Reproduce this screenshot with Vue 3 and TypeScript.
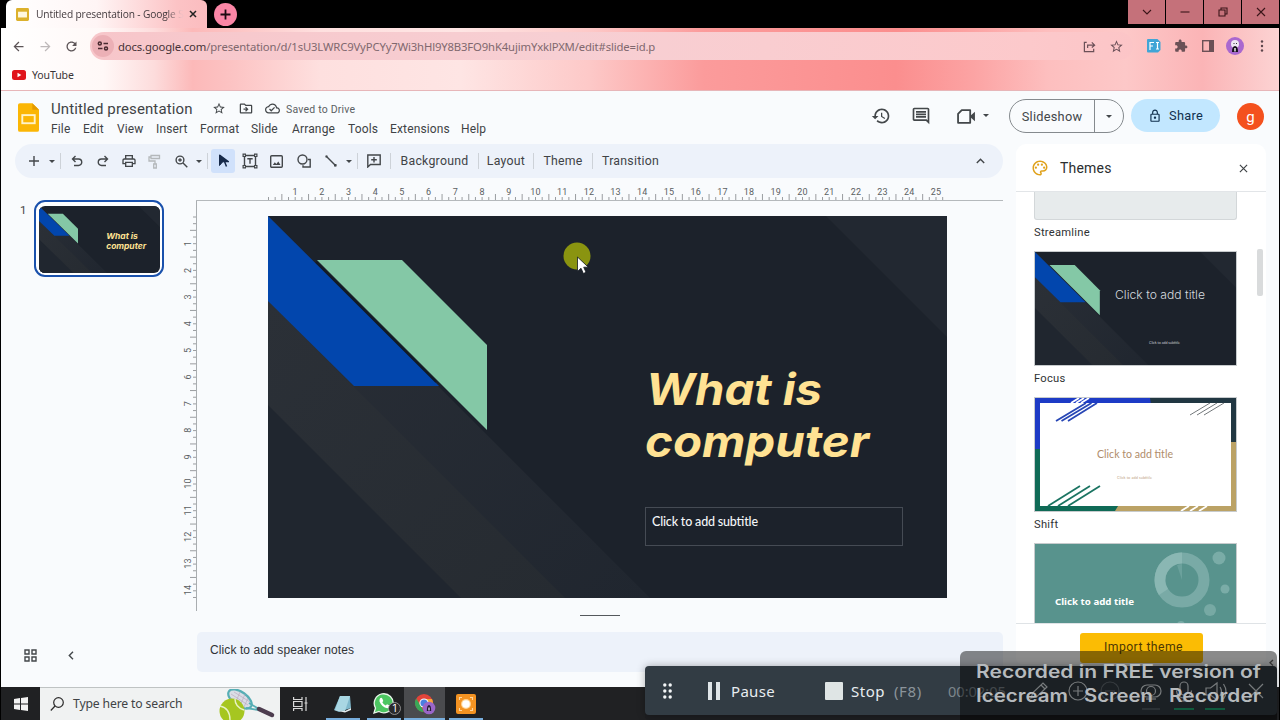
<script setup lang="ts">
const ic: Record<string, string> = {
  back: 'M20 11H7.83l5.59-5.59L12 4l-8 8 8 8 1.41-1.41L7.83 13H20v-2z',
  forward: 'M12 4l-1.41 1.41L16.17 11H4v2h12.17l-5.58 5.59L12 20l8-8z',
  refresh: 'M17.65 6.35C16.2 4.9 14.21 4 12 4c-4.42 0-7.99 3.58-7.99 8s3.57 8 7.99 8c3.73 0 6.84-2.55 7.73-6h-2.08c-.82 2.33-3.04 4-5.65 4-3.31 0-6-2.69-6-6s2.69-6 6-6c1.66 0 3.14.69 4.22 1.78L13 11h7V4l-2.35 2.35z',
  star: 'M22 9.24l-7.19-.62L12 2 9.19 8.63 2 9.24l5.46 4.73L5.82 21 12 17.27 18.18 21l-1.63-7.03L22 9.24zM12 15.4l-3.76 2.27 1-4.28-3.32-2.88 4.38-.38L12 6.1l1.71 4.04 4.38.38-3.32 2.88 1 4.28L12 15.4z',
  puzzle: 'M20.5 11H19V7c0-1.1-.9-2-2-2h-4V3.5C13 2.12 11.88 1 10.5 1S8 2.12 8 3.5V5H4c-1.1 0-1.99.9-1.99 2v3.8H3.5c1.49 0 2.7 1.21 2.7 2.7s-1.21 2.7-2.7 2.7H2V20c0 1.1.9 2 2 2h3.8v-1.5c0-1.49 1.21-2.7 2.7-2.7 1.49 0 2.7 1.21 2.7 2.7V22H17c1.1 0 2-.9 2-2v-4h1.5c1.38 0 2.5-1.12 2.5-2.5S21.88 11 20.5 11z',
  history: 'M13 3c-4.97 0-9 4.03-9 9H1l3.89 3.89.07.14L9 12H6c0-3.87 3.13-7 7-7s7 3.13 7 7-3.13 7-7 7c-1.93 0-3.68-.79-4.94-2.06l-1.42 1.42C8.27 19.99 10.51 21 13 21c4.97 0 9-4.03 9-9s-4.03-9-9-9zm-1 5v5l4.28 2.54.72-1.21-3.5-2.08V8H12z',
  comment: 'M21.99 4c0-1.1-.89-2-1.99-2H4c-1.1 0-2 .9-2 2v12c0 1.1.9 2 2 2h14l4 4-.01-18zM20 4v13.17L18.83 16H4V4h16zM6 12h12v2H6zm0-3h12v2H6zm0-3h12v2H6z',
  print: 'M19 8h-1V3H6v5H5c-1.66 0-3 1.34-3 3v6h4v4h12v-4h4v-6c0-1.66-1.34-3-3-3zM8 5h8v3H8V5zm8 12v2H8v-4h8v2zm2-2v-2H6v2H4v-4c0-.55.45-1 1-1h14c.55 0 1 .45 1 1v4h-2z',
  lock: 'M18 8h-1V6c0-2.76-2.24-5-5-5S7 3.24 7 6v2H6c-1.1 0-2 .9-2 2v10c0 1.1.9 2 2 2h12c1.1 0 2-.9 2-2V10c0-1.1-.9-2-2-2zM9 6c0-1.66 1.34-3 3-3s3 1.34 3 3v2H9V6zm9 14H6V10h12v10zm-6-3c1.1 0 2-.9 2-2s-.9-2-2-2-2 .9-2 2 .9 2 2 2z',
  palette: 'M12 22C6.49 22 2 17.51 2 12S6.49 2 12 2s10 4.04 10 9c0 3.31-2.69 6-6 6h-1.77c-.28 0-.5.22-.5.5 0 .12.05.23.13.33.41.47.64 1.06.64 1.67 0 1.38-1.12 2.5-2.5 2.5zm0-18c-4.41 0-8 3.59-8 8s3.59 8 8 8c.28 0 .5-.22.5-.5 0-.16-.08-.28-.14-.35-.41-.46-.63-1.05-.63-1.65 0-1.38 1.12-2.5 2.5-2.5H16c2.21 0 4-1.79 4-4 0-3.86-3.59-7-8-7zM8 11.5a1.5 1.5 0 1 1-3 0a1.5 1.5 0 0 1 3 0zM11 7.5a1.5 1.5 0 1 1-3 0a1.5 1.5 0 0 1 3 0zM16 7.5a1.5 1.5 0 1 1-3 0a1.5 1.5 0 0 1 3 0zM19 11.5a1.5 1.5 0 1 1-3 0a1.5 1.5 0 0 1 3 0z',
  cloud: 'M19.35 10.04C18.67 6.59 15.64 4 12 4 9.11 4 6.6 5.64 5.35 8.04 2.34 8.36 0 10.91 0 14c0 3.31 2.69 6 6 6h13c2.76 0 5-2.24 5-5 0-2.64-2.05-4.78-4.65-4.96zM19 18H6c-2.21 0-4-1.79-4-4 0-2.05 1.53-3.76 3.56-3.97l1.07-.11.5-.95C8.08 7.14 9.94 6 12 6c2.62 0 4.88 1.86 5.39 4.43l.3 1.5 1.53.11c1.56.1 2.78 1.41 2.78 2.96 0 1.65-1.35 3-3 3zm-9-3.82l-2.09-2.09L6.5 13.5 10 17l6.01-6.01-1.41-1.41z',
  folder: 'M20 6h-8l-2-2H4c-1.1 0-2 .9-2 2v12c0 1.1.9 2 2 2h16c1.1 0 2-.9 2-2V8c0-1.1-.9-2-2-2zm0 12H4V6h5.17l2 2H20v10zM12.16 12H8v2h4.16l-1.59 1.59L11.99 17 16 13.01 11.99 9l-1.41 1.41z',
}

const menus = ['File', 'Edit', 'View', 'Insert', 'Format', 'Slide', 'Arrange', 'Tools', 'Extensions', 'Help']

const unit = 26.7
interface Tick { p: number; h: number }
const ticks = (count: number): Tick[] =>
  Array.from({ length: count }, (_, i) => ({ p: (i * unit) / 4, h: i % 4 === 2 ? 6 : 3 }))
const hTicks = ticks(102)
const vTicks = ticks(58)
const hNums = Array.from({ length: 25 }, (_, i) => i + 1)
const vNums = Array.from({ length: 14 }, (_, i) => i + 1)
</script>

<template>
  <div class="screen">
    <svg class="defs" aria-hidden="true">
      <defs>
        <linearGradient id="bandA" x1="0" y1="0" x2="1" y2="1">
          <stop offset="0" stop-color="#2a2f37" /><stop offset="1" stop-color="#20262f" />
        </linearGradient>
        <linearGradient id="bandB" x1="0" y1="0" x2="1" y2="1">
          <stop offset="0" stop-color="#2b3037" /><stop offset="1" stop-color="#262b31" />
        </linearGradient>
        <symbol id="focus-art" viewBox="0 0 679 382" preserveAspectRatio="none">
          <rect width="679" height="382" fill="#1c222b" />
          <path d="M0 0L382 382H0z" fill="url(#bandA)" />
          <path d="M0 85L297 382H0z" fill="url(#bandB)" />
          <path d="M0 189L193 382H0z" fill="#20262f" />
          <path d="M558 0H679V121z" fill="#222831" />
          <path d="M0 0L171 170H86L0 85z" fill="#0246ad" />
          <path d="M49 44H134L219 129V214z" fill="#84c8a6" />
        </symbol>
      </defs>
    </svg>

    <!-- Browser chrome -->
    <div class="tabs">
      <div class="tab">
        <svg class="tab-ico" viewBox="0 0 14 14"><rect width="14" height="14" rx="1.5" fill="#dcb12c" /><rect x="2.2" y="4" width="9.6" height="6.2" fill="#fff8e0" /></svg>
        <span class="tab-title">Untitled presentation - Google S</span>
        <svg class="tab-x" viewBox="0 0 8 8"><path d="M1 1l6 6M7 1l-6 6" stroke="#222" stroke-width="1.5" /></svg>
      </div>
      <div class="newtab"><svg width="11" height="11" viewBox="0 0 11 11"><path d="M5.500 .5v10M.5 5.500h10" stroke="#1c0a10" stroke-width="1.800" /></svg></div>
      <div class="winbtns">
        <span><svg viewBox="0 0 12 12"><path d="M2 4l4 4 4-4" /></svg></span>
        <span><svg viewBox="0 0 12 12"><path d="M1.500 6h9" /></svg></span>
        <span><svg viewBox="0 0 12 12"><path d="M2 4h6v6H2zM4 4V2h6v6H8" /></svg></span>
        <span><svg viewBox="0 0 12 12"><path d="M2 2l8 8M10 2l-8 8" /></svg></span>
      </div>
    </div>

    <div class="chrome">
      <div class="nav">
        <svg class="n1" viewBox="0 0 24 24"><path :d="ic.back" /></svg>
        <svg class="n2" viewBox="0 0 24 24"><path :d="ic.forward" /></svg>
        <svg class="n3" viewBox="0 0 24 24"><path :d="ic.refresh" /></svg>
        <div class="omni">
          <div class="tune">
            <svg width="12" height="10" viewBox="0 0 12 10" fill="none" stroke="#4a2a30" stroke-width="1.500"><circle cx="2.800" cy="2.500" r="1.500" /><path d="M6.500 2.500h4.500M1 7.500h4.500" /><circle cx="9" cy="7.500" r="1.500" /></svg>
          </div>
          <span class="url"><b>docs.google.com</b>/presentation/d/1sU3LWRC9VyPCYy7Wi3hHl9Y8B3FO9hK4ujimYxklPXM/edit#slide=id.p</span>
          <svg class="share-ico" viewBox="0 0 14 14" fill="none" stroke="#6b5058" stroke-width="1.300"><path d="M4 2.500H1.500V12.500H11.500V9.500M5 8.500V5.500H11.500M9.500 2.500l3 3-3 2.500" /></svg>
          <svg class="star-ico" viewBox="0 0 24 24"><path :d="ic.star" /></svg>
        </div>
        <div class="exts">
          <svg viewBox="0 0 14 14"><path d="M1 0h9.500l3 3v8l-2.500 2.500H1q-1 0-1-1V1q0-1 1-1z" fill="#41a5d6" /><path d="M3 11V3.500h4M3 7h3M9 3.500h3M10.500 3.500V10M9 10h3" stroke="#fff" stroke-width="1.200" fill="none" /></svg>
          <svg viewBox="0 0 24 24"><path :d="ic.puzzle" fill="#6b5056" /></svg>
          <svg viewBox="0 0 14 14"><rect x="1.700" y="1.700" width="10.600" height="10.600" fill="none" stroke="#6b5056" stroke-width="1.400" /><rect x="8" y="1.500" width="4.500" height="11" fill="#6b5056" /></svg>
          <svg class="ava" viewBox="0 0 18 18"><circle cx="9" cy="9" r="9" fill="#a968cf" /><circle cx="9" cy="7" r="4" fill="#eee6f4" /><path d="M6 15q0-6 3-6t3 6z" fill="#15101c" /><path d="M7.500 6.500h1M10 6.500h1" stroke="#333" /><path d="M8.300 11h1.400v3.500H8.300z" fill="#fff" /></svg>
          <svg viewBox="0 0 14 14" fill="#5c454b"><circle cx="7" cy="2.500" r="1.200" /><circle cx="7" cy="7" r="1.200" /><circle cx="7" cy="11.500" r="1.200" /></svg>
        </div>
      </div>
      <div class="bookmarks">
        <svg width="14" height="10" viewBox="0 0 14 10"><rect width="14" height="10" rx="2.500" fill="#e0151c" /><path d="M5.500 2.800L9.300 5 5.500 7.200z" fill="#fff" /></svg>
        <span>YouTube</span>
      </div>
    </div>

    <!-- Slides application -->
    <div class="app">
      <header class="head">
        <svg class="logo" viewBox="0 0 22 30"><path d="M2 0h13l7 7v21q0 2-2 2H2q-2 0-2-2V2q0-2 2-2z" fill="#fbb605" /><path d="M15 0l7 7h-7z" fill="#e49a00" /><rect x="4.500" y="12.500" width="13" height="8.500" fill="#fbb605" stroke="#fff3c9" stroke-width="2" /></svg>
        <div class="titles">
          <div class="title-row">
            <span class="doc-title">Untitled presentation</span>
            <svg class="t-ico a" viewBox="0 0 24 24"><path :d="ic.star" /></svg>
            <svg class="t-ico b" viewBox="0 0 24 24"><path :d="ic.folder" /></svg>
            <svg class="t-ico c" viewBox="0 0 24 24"><path :d="ic.cloud" /></svg>
            <span class="saved">Saved to Drive</span>
          </div>
          <nav class="menus"><span v-for="m in menus" :key="m">{{ m }}</span></nav>
        </div>
        <div class="head-right">
          <svg class="h1" viewBox="0 0 24 24"><path :d="ic.history" /></svg>
          <svg class="h2" viewBox="0 0 24 24"><path :d="ic.comment" /></svg>
          <svg class="h3" viewBox="0 0 18 14"><path d="M4.500 1H12.500V13H1V4.500z" fill="none" stroke="#43474a" stroke-width="1.700" stroke-linejoin="round" /><path d="M13 6l4-3.500v9L13 8z" fill="#43474a" /></svg>
          <i class="caret h4"></i>
          <div class="slideshow"><span>Slideshow</span><em><i class="caret"></i></em></div>
          <div class="share"><svg viewBox="0 0 24 24"><path :d="ic.lock" /></svg><span>Share</span></div>
          <div class="user">g</div>
        </div>
      </header>

      <div class="work">
        <div class="left">
          <div class="toolbar">
            <div><svg width="10" height="10" viewBox="0 0 10 10"><path d="M5 0v10M0 5h10" class="st" /></svg></div>
            <div><i class="caret"></i></div>
            <div><u></u></div>
            <div><svg width="12" height="12" viewBox="0 0 12 12"><path d="M4.500 1L1.500 4l3 3M1.500 4H7.500a3 3 0 0 1 0 6.500H3" class="st" /></svg></div>
            <div><svg width="12" height="12" viewBox="0 0 12 12"><path d="M7.500 1l3 3-3 3M10.500 4H4.500a3 3 0 0 0 0 6.500H9" class="st" /></svg></div>
            <div><svg width="16" height="16" viewBox="0 0 24 24"><path :d="ic.print" fill="#43474a" /></svg></div>
            <div><svg width="14" height="15" viewBox="0 0 14 15"><path d="M3 1.500h8.500v3H3zM3 3H1v4h6v3M5.700 10h2.600v4H5.700z" fill="none" stroke="#b4b8bb" stroke-width="1.300" /></svg></div>
            <div><svg width="13" height="13" viewBox="0 0 13 13"><circle cx="5" cy="5" r="3.900" class="st" /><path d="M8 8l4.300 4.300M5 3.200v3.600M3.200 5h3.600" class="st" /></svg></div>
            <div><i class="caret"></i></div>
            <div><u></u></div>
            <div class="sel"><svg width="11" height="14" viewBox="0 0 11 14"><path d="M1.500 1L10 7.500H6.500L8.500 12.500" fill="none" stroke="#16294a" stroke-width="1.500" /><path d="M1.500 1V11.500L4.500 8L6.500 7.500H9z" fill="#16294a" stroke="#16294a" /></svg></div>
            <div><svg width="16" height="16" viewBox="0 0 16 16"><path d="M2.500 2.500h11v11h-11zM5.300 5.800h5.400M8 5.800v5" class="st" stroke-width="1.200" /><path d="M.5.500h3.500v3.500H.5zM12 .5h3.500v3.500H12zM.5 12h3.500v3.500H.5zM12 12h3.500v3.500H12z" fill="#43474a" /><path d="M1.700 1.700h1.200v1.200H1.700zM13.100 1.700h1.200v1.200h-1.200zM1.700 13.100h1.200v1.200H1.700zM13.100 13.100h1.200v1.200h-1.200z" fill="#edf2fa" /></svg></div>
            <div><svg width="13" height="13" viewBox="0 0 13 13"><rect x=".7" y=".7" width="11.600" height="11.600" rx="1" class="st" /><path d="M2.800 10l2-2.800 1.500 1.800 2-2.500 2.200 3.500z" fill="#43474a" /></svg></div>
            <div><svg width="14" height="14" viewBox="0 0 14 14"><circle cx="5.500" cy="5.500" r="4.500" class="st" /><path d="M11 5.500h2.200V13H6v-1.800" class="st" /></svg></div>
            <div><svg width="12" height="12" viewBox="0 0 12 12"><path d="M1 1l10 10" class="st" /><path d="M9 9h2.500v2.500H9zM.5 .5h2v2h-2z" fill="#43474a" /></svg></div>
            <div><i class="caret"></i></div>
            <u></u>
            <div><svg width="14" height="14" viewBox="0 0 14 14"><path d="M.8 1h12.400v9.500H3.500L.8 13zM7 3v5.500M4.200 5.700h5.600" class="st" /></svg></div>
            <u></u>
            <div>Background</div><u></u>
            <div>Layout</div><u></u>
            <div>Theme</div><u></u>
            <div>Transition</div>
            <div class="collapse"><svg width="9" height="6" viewBox="0 0 9 6"><path d="M.8 5l3.700-3.700L8.200 5" class="st" /></svg></div>
          </div>

          <div class="body">
            <aside class="film">
              <div class="film-row">
                <span>1</span>
                <div class="thumb-frame">
                  <svg viewBox="0 0 679 382" preserveAspectRatio="none">
                    <use href="#focus-art" width="679" height="382" />
                    <text class="big" x="377" y="190" font-size="46" textLength="178" lengthAdjust="spacingAndGlyphs">What is</text>
                    <text class="big" x="377" y="244" font-size="46" textLength="224" lengthAdjust="spacingAndGlyphs">computer</text>
                  </svg>
                </div>
              </div>
              <div class="film-foot">
                <svg width="13" height="13" viewBox="0 0 13 13"><path d="M1 1h4v4H1zM8 1h4v4H8zM1 8h4v4H1zM8 8h4v4H8z" class="st" /></svg>
                <svg width="6" height="9" viewBox="0 0 6 9"><path d="M5 .8L1.300 4.500 5 8.200" class="st" /></svg>
              </div>
            </aside>
            <section class="editor">
              <svg class="hruler" width="828" height="24" viewBox="0 0 828 24">
                <path d="M21 22.500H828" stroke="#b5b9bc" />
                <g transform="translate(93.500 -1)">
                  <path v-for="t in hTicks" :key="t.p" :d="`M${t.p} ${23 - t.h}V23`" stroke="#8e9295" stroke-width=".9" />
                  <text v-for="n in hNums" :key="n" :x="n * unit" y="18" class="rn">{{ n }}</text>
                </g>
              </svg>
              <div class="canvas-row">
                <svg class="vruler" width="22" height="409" viewBox="0 0 22 409">
                  <path d="M21.500 -1V409" stroke="#a9adb0" />
                  <g transform="translate(0 15)">
                    <path v-for="t in vTicks" :key="t.p" :d="`M${21 - t.h} ${t.p}H21`" stroke="#8e9295" stroke-width=".9" />
                    <text v-for="n in vNums" :key="n" :transform="`translate(16 ${n * 26.65}) rotate(-90)`" class="rn">{{ n }}</text>
                  </g>
                </svg>
                <div class="slide">
                  <svg width="679" height="382" viewBox="0 0 679 382">
                    <use href="#focus-art" width="679" height="382" />
                    <path d="M48 46L168 166" stroke="#0b1620" stroke-width="2" opacity=".6" />
                    <text class="big" x="378" y="189" font-size="44" textLength="176" lengthAdjust="spacingAndGlyphs">What is</text>
                    <text class="big" x="377" y="241" font-size="44" textLength="224" lengthAdjust="spacingAndGlyphs">computer</text>
                    <rect x="377.500" y="291.500" width="257" height="38" fill="none" stroke="#454b54" />
                    <text x="384" y="310" fill="#f4f6f8" font-family="Lato, sans-serif" font-size="12.500" font-weight="500" textLength="106">Click to add subtitle</text>
                    <circle cx="309" cy="40" r="13.500" fill="#8a9410" />
                    <path d="M309.500 41v14.500l3.500-3.300 2.400 5.300 2.600-1.200-2.300-5.100h4.600z" fill="#fff" stroke="#111820" stroke-width=".8" />
                  </svg>
                </div>
              </div>
              <div class="grip"></div>
              <div class="notes">Click to add speaker notes</div>
            </section>
          </div>
        </div>

        <aside class="themes">
          <div class="th-head">
            <svg class="pal" viewBox="0 0 24 24"><path :d="ic.palette" /></svg>
            <span>Themes</span>
            <svg class="th-x" viewBox="0 0 10 10"><path d="M1 1l8 8M9 1L1 9" stroke="#3f4346" stroke-width="1.300" /></svg>
          </div>
          <div class="th-list">
            <div class="stream"></div>
            <p>Streamline</p>
            <svg class="th" viewBox="0 0 201 113">
              <use href="#focus-art" width="201" height="113" />
              <text x="80" y="47" fill="#d5dade" font-family="Inter, sans-serif" font-size="11" font-weight="300" textLength="90" lengthAdjust="spacingAndGlyphs">Click to add title</text>
              <text x="114" y="92" fill="#c6cbd0" font-family="Lato, sans-serif" font-size="3.600" textLength="31">Click to add subtitle</text>
            </svg>
            <p>Focus</p>
            <svg class="th" viewBox="0 0 201 113">
              <rect width="201" height="113" fill="#bba265" />
              <path d="M0 0H118V20H20V51H0z" fill="#1d3bc6" />
              <path d="M115 0H201V44H180V20H118z" fill="#213742" />
              <path d="M0 51H20V100H88L80 113H0z" fill="#0f6a56" />
              <rect x="5" y="5" width="191" height="103" fill="#fff" />
              <g fill="none" stroke-width="1.800">
                <path d="M21 23L51 5M26.500 23L56.500 5M33 23L62 5" stroke="#2746b5" />
                <path d="M36 5L44 0M41 5L49 0M46 5L54 0" stroke="#fff" />
                <path d="M13 108L45 88M23 108L55 88M33 108L65 88" stroke="#1b7462" />
                <path d="M146 113L154 108M155 113L163 108M164 113L172 108" stroke="#fff" />
                <path d="M155 17L175 5M162 17L182 5M169 17L189 5" stroke="#50575b" stroke-width=".8" />
              </g>
              <text x="62" y="60" fill="#b08d6b" font-family="Lato, sans-serif" font-size="11" textLength="76" lengthAdjust="spacingAndGlyphs">Click to add title</text>
              <text x="82" y="81" fill="#c0a283" font-family="Lato, sans-serif" font-size="3.800" textLength="35">Click to add subtitle</text>
            </svg>
            <p>Shift</p>
            <svg class="th" viewBox="0 0 201 113">
              <rect width="201" height="113" fill="#58938d" />
              <circle cx="147" cy="36" r="22" fill="none" stroke="#79aaa6" stroke-width="11" />
              <path d="M147 8.500A27.500 27.500 0 0 0 124 51L133 45A16.500 16.500 0 0 1 147 19.500z" fill="#8ab7b3" />
              <path d="M147 36V20A16 16 0 0 0 142 21z" fill="#6ba19c" />
              <circle cx="184" cy="14" r="6.500" fill="#7aaca7" /><circle cx="190" cy="45" r="4.500" fill="#7aaca7" /><circle cx="175" cy="66" r="6" fill="#77a9a4" /><circle cx="146" cy="81" r="4" fill="#79aaa6" />
              <text x="20" y="60.500" fill="#fff" font-family="'Noto Sans', sans-serif" font-size="9.500" font-weight="700" textLength="79" lengthAdjust="spacingAndGlyphs">Click to add title</text>
            </svg>
          </div>
          <div class="th-foot"><div class="import">Import theme</div></div>
          <div class="scroll"></div>
        </aside>
      </div>
    </div>

    <!-- Windows taskbar -->
    <footer class="task">
      <div class="start"><svg width="14" height="14" viewBox="0 0 14 14"><path d="M0 2l6-.9V6.500H0zM7 1l7-1v6.500H7zM0 7.500h6V13L0 12.100zM7 7.500h7V14L7 13z" fill="#f2f2f2" /></svg></div>
      <div class="search">
        <svg width="14" height="14" viewBox="0 0 14 14" fill="none" stroke="#2b2b2b" stroke-width="1.200"><circle cx="8.500" cy="5.500" r="4.800" /><path d="M5 9L.8 13.500" /></svg>
        <span>Type here to search</span>
        <svg class="racket" width="56" height="31" viewBox="0 0 56 31">
          <ellipse cx="21" cy="10" rx="13.500" ry="7" transform="rotate(35 21 10)" fill="#d9dde6" stroke="#56aeb5" stroke-width="2.200" />
          <path d="M12 5l17 11M15 3l16 10M11 9l12 9M16 15l5-12M21 17l5-12M25 18l4-9" stroke="#b9a3b8" stroke-width=".6" />
          <path d="M30 14L40 20M27 19L40 21" stroke="#56aeb5" stroke-width="1.800" /><path d="M40 20L53 26" stroke="#4d3d4f" stroke-width="4.500" stroke-linecap="round" />
          <circle cx="13" cy="22" r="12.500" fill="#a6c620" /><path d="M1 17q10 2 10 14M16 10q0 8 9 11" fill="none" stroke="#e8f3c6" stroke-width="1.400" />
        </svg>
      </div>
      <div class="tk tv"><svg width="15" height="14" viewBox="0 0 15 14" fill="none" stroke="#d8d8d8" stroke-width="1.200"><path d="M.6 0v2.500H9V0M.6 14v-2.500H9V14M.6 4.500H9v5H.6zM13 0v14M11.500 6h3" /></svg></div>
      <div class="tk"><svg width="18" height="18" viewBox="0 0 18 18"><path d="M6 1h10l1 12-12 4-5-2z" fill="#7fb9cc" /><path d="M6 1h10L11 16 1 15z" fill="#a9d7e3" /><path d="M0 15l11 1 6-3v2l-6 2.500z" fill="#e5eef0" /></svg><b></b></div>
      <div class="tk wa"><svg width="28" height="24" viewBox="0 0 28 24"><path d="M1 21l1.500-5A9.500 9.500 0 1 1 6 19.500z" fill="#4cc661" stroke="#e8f7ea" stroke-width="1.300" /><path d="M7 6.500q1.500-1.500 2.500.5l.8 2-1 1.300q1.200 2.200 3.500 3.200l1.200-1.300 2.500 1.200q.5 2.500-2.200 2.800Q9 15.500 6.500 9.500 6.300 7.500 7 6.500z" fill="#fff" /><circle cx="21.500" cy="16.500" r="6" fill="#2a2a2c" stroke="#a6a6a6" stroke-width=".8" /><text x="21.500" y="20" fill="#fff" text-anchor="middle" font-family="Inter, sans-serif" font-size="10">1</text></svg><b></b></div>
      <div class="tk on"><svg width="22" height="22" viewBox="0 0 22 22"><circle cx="10" cy="10" r="9" fill="#e2443a" /><path d="M2.200 5.500L7.500 14 10 19A9 9 0 0 1 2.200 5.500z" fill="#3aa757" /><path d="M10 19A9 9 0 0 0 18 6H10l4.500 6z" fill="#f5a63b" /><circle cx="10" cy="10" r="4.600" fill="#fff" /><circle cx="10" cy="10" r="3.600" fill="#4a7fe0" /><circle cx="15" cy="15" r="6.300" fill="#9a66c9" /><path d="M12.800 18q0-6 2.200-6t2.200 6z" fill="#241b38" /><path d="M14.300 14.500h1.400v3h-1.400z" fill="#d8c9ea" /></svg><b></b></div>
      <div class="tk"><svg width="20" height="20" viewBox="0 0 20 20"><rect width="20" height="20" rx="2" fill="#f39322" /><path d="M3.500 6V3.500H6M14 3.500h2.500V6M16.500 14v2.500H14M6 16.500H3.500V14" stroke="#ffd7a0" stroke-width="1.100" fill="none" /><circle cx="10" cy="10" r="5" fill="#ffd595" /><circle cx="10" cy="10" r="3.800" fill="#fff" /></svg><b></b></div>
    </footer>

    <!-- Floating recorder and its watermark -->
    <div class="rec">
      <svg class="dots" width="9" height="16" viewBox="0 0 9 16" fill="#f3f6f7"><circle v-for="k in 6" :key="k" :cx="k % 2 ? 1.8 : 7.2" :cy="2 + Math.floor((k - 1) / 2) * 6" r="1.700" /></svg>
      <i class="pause"></i><span class="p-t">Pause</span>
      <i class="stop"></i><span class="s-t">Stop</span><span class="f8">(F8)</span>
      <span class="time">00:02:05</span>
      <svg class="tools" width="240" height="48" viewBox="0 0 240 48" fill="none" stroke="#dce2e5" stroke-width="1.200">
        <path d="M7 31L9 25.500 19 16l4 4L13 29.500zM17 18l4 4" />
        <circle cx="54" cy="24" r="9" /><path d="M49 24h10M54 19v10" />
        <g opacity=".3"><circle cx="86" cy="24" r="9" /><path d="M81 24h10" /></g>
        <rect x="117" y="18" width="20" height="12" rx="6" /><circle cx="127" cy="24" r="4.500" /><path d="M122 32h10" />
        <rect x="156" y="15" width="8" height="13" rx="4" /><path d="M152.500 23.500a7.500 7.500 0 0 0 15 0M160 31v3M156 34h8" />
        <path d="M182 21v7h4.500l6.500 5V16l-6.500 5zM196 20q3 4.500 0 9M199.500 17q5 7.500 0 15" />
        <path d="M225 17l14 14M239 17l-14 14" />
        <path d="M118 42h18" stroke="#667078" /><path d="M150 42h20M181 42h20" stroke="#1fa672" stroke-width="2" />
      </svg>
    </div>
    <div class="mark">
      <svg width="317" height="69" viewBox="0 0 317 69">
        <g fill="#b6babd" font-family="Inter, sans-serif" font-size="18" font-weight="600">
          <text x="16" y="27" textLength="285" lengthAdjust="spacingAndGlyphs">Recorded in FREE version of</text>
          <text x="16" y="51" textLength="92" lengthAdjust="spacingAndGlyphs">Icecream</text>
          <text x="124" y="51" textLength="69" lengthAdjust="spacingAndGlyphs">Screen</text>
          <text x="209" y="51" textLength="92" lengthAdjust="spacingAndGlyphs">Recorder</text>
        </g>
        <path d="M313 9l-3 2.700 3 2.700" fill="none" stroke="#333" stroke-width="1.300" />
      </svg>
    </div>
  </div>
</template>

<style>
html, body { margin: 0; background: #000; }
</style>

<style scoped>
* { box-sizing: border-box; }
.screen { position: relative; width: 1280px; height: 720px; overflow: hidden; background: #000; display: flex; flex-direction: column; padding: 0 1px; font-family: Roboto, sans-serif; color: #3f4346; }
.screen svg { flex: none; display: block; }
.defs { position: absolute; width: 0; height: 0; }
.st { fill: none; stroke: #43474a; stroke-width: 1.4; }
.caret { width: 0; height: 0; border: 3.5px solid transparent; border-top-color: #43474a; border-bottom: 0; display: block; }

.tabs { height: 28px; flex: none; display: flex; background: #000; }
.tab { margin-left: 5px; width: 201px; height: 28px; border-radius: 6px 6px 0 0; padding-left: 10px; display: flex; align-items: center; background: linear-gradient(90deg, #fff 0, #fff5f5 45%, #fcc3c5 85%, #fbbcbf 100%); }
.tab-ico { width: 13px; height: 13px; }
.tab-title { margin-left: 7px; width: 148px; white-space: nowrap; font: 10.2px 'Open Sans', sans-serif; letter-spacing: -.13px; color: transparent; background: linear-gradient(90deg, #3c3438 88%, #f0c0c4 98%); background-clip: text; }
.tab-x { width: 8px; height: 8px; margin-left: 5px; }
.newtab { width: 23px; height: 23px; margin: 3px 0 0 7px; border-radius: 50%; background: #fb86a6; display: flex; align-items: center; justify-content: center; }
.winbtns { margin-left: auto; display: flex; gap: 1px; height: 24px; }
.winbtns span { width: 37px; background: #c5717a; display: flex; align-items: center; justify-content: center; }
.winbtns svg { width: 12px; height: 12px; fill: none; stroke: #3a1519; stroke-width: 1.1; }

.chrome { height: 63px; flex: none; border-bottom: 1px solid #e7b6b9; background: linear-gradient(90deg, #fff 0, #fff8f7 8%, #fddcdc 12%, #fcb9b9 15%, #fcc3c3 18%, #fee0df 25%, #fee5e4 36%, #fdc9c8 46%, #fb9b9b 55%, #fb8e8e 70%, #fca3a3 76%, #fdbfbf 82%, #fdc8c8 88%, #fbb4b6 94%, #fcd3d3 100%); }
.nav { height: 36px; display: flex; align-items: center; }
.nav > svg { width: 15px; height: 15px; fill: #5c5457; }
.n1 { margin-left: 10px; } .n2 { margin-left: 12px; opacity: .4; } .n3 { margin-left: 11px; }
.omni { margin-left: 11px; width: 1043px; height: 28px; border-radius: 14px; background: linear-gradient(90deg, #f7c6ca, #f7cfd3 45%, #f9cdd0 65%, #fcc9cb 90%, #fcc5c7); display: flex; align-items: center; }
.tune { width: 22px; height: 22px; margin-left: 2px; border-radius: 50%; background: #ecb0b6; display: flex; align-items: center; justify-content: center; }
.url { margin-left: 4px; width: 960px; white-space: nowrap; font: 11.3px 'Noto Sans', sans-serif; letter-spacing: -.14px; color: #80686e; }
.url b { font-weight: 400; color: #463237; }
.share-ico { width: 13px; height: 13px; margin-left: 5px; } .star-ico { width: 15px; height: 15px; margin-left: 13px; fill: #6b5058; }
.exts { display: flex; align-items: center; gap: 13px; margin-left: 14px; }
.exts svg { width: 14px; height: 14px; } .exts .ava { width: 18px; height: 18px; margin: 0 -2px; }
.bookmarks { height: 24px; display: flex; align-items: center; padding: 0 0 2px 11px; gap: 6px; font: 10.5px 'Noto Sans', sans-serif; letter-spacing: -.1px; color: #3a3436; }

.app { height: 596px; flex: none; background: #f9fbfd; }
.head { height: 53px; display: flex; }
.logo { width: 21px; height: 29px; margin: 12px 0 0 17px; }
.titles { margin-left: 12px; width: 650px; }
.title-row { height: 29px; padding-top: 6px; display: flex; align-items: center; }
.doc-title { width: 143px; white-space: nowrap; font-size: 15px; letter-spacing: .12px; }
.t-ico { fill: #43474a; width: 15px; height: 15px; }
.t-ico.a { margin-left: 18px; width: 14px; } .t-ico.b { margin-left: 12px; width: 16px; } .t-ico.c { margin-left: 11px; }
.saved { margin-left: 6px; padding-top: 1px; font-size: 10.5px; letter-spacing: .2px; color: #5b5f63; }
.menus { display: grid; grid-template-columns: 32px 34px 39px 44px 51px 41px 56px 42px 71px 40px; font-size: 12px; letter-spacing: .15px; line-height: 16px; padding-top: 1px; }
.head-right { margin-left: auto; display: flex; align-items: flex-start; }
.head-right > svg { fill: #43474a; }
.h1 { width: 20px; height: 20px; margin-top: 15px; } .h2 { width: 20px; height: 20px; margin: 15px 0 0 20px; } .h3 { width: 19px; height: 15px; margin: 18px 0 0 26px; }
.h4 { margin: 23px 0 0 7px; }
.slideshow { margin: 8px 0 0 20px; width: 115px; height: 34px; border: 1px solid #858a8e; border-radius: 17px; display: flex; align-items: center; font-size: 12.8px; letter-spacing: .25px; color: #43474a; }
.slideshow span { width: 84px; text-align: center; }
.slideshow em { width: 29px; height: 32px; border-left: 1px solid #858a8e; display: flex; align-items: center; justify-content: center; }
.share { margin: 8px 0 0 7px; width: 89px; height: 33px; border-radius: 17px; background: #c2e7ff; display: flex; align-items: center; justify-content: center; gap: 7px; font-size: 12.8px; letter-spacing: .25px; color: #10304e; }
.share svg { width: 14px; height: 14px; fill: #10304e; }
.user { margin: 12px 15px 0 17px; width: 27px; height: 27px; border-radius: 50%; background: #f4511e; color: #fff; font-size: 15px; display: flex; align-items: center; justify-content: center; }

.work { display: flex; height: 543px; }
.left { width: 1002px; }
.toolbar { margin-left: 14px; height: 34px; border-radius: 17px; background: #edf2fa; padding-left: 7px; display: grid; grid-template-columns: 24px 12px 5px 28px 24px 28px 24px 28px 8px 8px 24px 30px 22px 34px 20px 16px 1px 32px 1px 87px 1px 54px 1px 58px 1px 75px 1fr; align-items: center; font-size: 12.3px; letter-spacing: .25px; }
.toolbar > div { display: flex; align-items: center; justify-content: center; }
.toolbar u { display: block; width: 1px; height: 16px; background: #cdd2d8; }
.toolbar .sel { height: 24px; background: #d0e1fb; border-radius: 3px; }
.toolbar .collapse { justify-content: flex-end; padding-right: 18px; }
.body { display: flex; height: 509px; }
.film { width: 174px; display: flex; flex-direction: column; justify-content: space-between; }
.film-row { display: flex; padding: 22px 0 0 19px; font-size: 11.5px; }
.film-row span { width: 14px; padding-top: 3px; }
.thumb-frame { width: 130px; height: 77px; border: 2px solid #1a51ac; border-radius: 11px; padding: 3px; background: #fff; }
.thumb-frame svg { width: 121px; height: 67px; border-radius: 6px; margin: 1px 0 0; }
.big { fill: #ffe293; font-family: Inter, sans-serif; font-weight: 700; font-style: italic; }
.film-foot { display: flex; align-items: center; gap: 31px; padding: 0 0 25px 23px; }
.editor { flex: 1; }
.rn { font: 9px Roboto, sans-serif; fill: #5b5f63; text-anchor: middle; letter-spacing: .2px; }
.canvas-row { display: flex; height: 409px; }
.vruler { overflow: visible; }
.slide { margin: 14px 0 0 71px; height: 383px; }
.grip { width: 40px; height: 1px; background: #55595d; margin: 4px 0 16px 405px; }
.notes { margin-left: 22px; height: 40px; border-radius: 5px; background: #edf2fa; padding: 10px 0 0 13px; font: 12px 'Liberation Sans', sans-serif; line-height: 16px; letter-spacing: .1px; color: #303336; }

.themes { position: relative; margin-left: 13px; width: 250px; height: 520px; background: #fff; border-radius: 10px 10px 6px 6px; }
.th-head { height: 48px; border-bottom: 1px solid #e2e5e8; display: flex; align-items: center; padding: 1px 0 0 15px; font-size: 14px; letter-spacing: .2px; color: #2b2e30; }
.pal { width: 18px; height: 18px; fill: #e0a21c; margin-right: 11px; }
.th-x { width: 9px; height: 9px; margin-left: auto; margin-right: 18px; }
.th-list { height: 432px; overflow: hidden; padding-left: 18px; border-bottom: 1px solid #dfe3e6; }
.stream { width: 203px; height: 28px; background: #e7ebec; border: 1px solid #d3d7d9; border-top: 0; border-radius: 0 0 3px 3px; }
.th-list p { margin: 0; height: 31px; padding-top: 5px; font-size: 11.2px; letter-spacing: .25px; line-height: 15px; color: #2f3234; }
.th { width: 203px; height: 115px; border: 1px solid #c7cbcd; }
.th-foot { padding: 9px 0 0 64px; }
.import { width: 123px; height: 30px; background: #fbbc04; border-radius: 3px; padding-left: 4px; text-align: center; font: 12.2px/29px Roboto, sans-serif; letter-spacing: .45px; color: #4c3704; }
.scroll { position: absolute; left: 241px; top: 105px; width: 6px; height: 47px; border-radius: 2px; background: #d9dbdc; }

.task { height: 33px; flex: none; background: #202123; display: flex; }
.start { width: 39px; display: flex; align-items: center; justify-content: center; }
.search { width: 240px; background: #f0f2f2; border-top: 1px solid #bfc3c3; display: flex; align-items: center; padding-left: 10px; font: 12.2px 'Noto Sans', sans-serif; letter-spacing: -.15px; color: #404345; }
.search span { margin: -2px 0 0 9px; width: 146px; white-space: nowrap; }
.racket { margin-top: 1px; }
.tk { width: 41px; position: relative; display: flex; align-items: center; justify-content: center; }
.tk.tv { width: 42px; padding-right: 2px; } .tk.on { background: #4a4b4e; }
.wa svg { margin-left: 6px; }
.tk b { position: absolute; left: 4px; right: 3px; bottom: 0; height: 2px; background: #78aedd; }
.tk.on b { left: 0; right: 0; }

.rec { position: absolute; left: 645px; top: 666px; width: 632px; height: 49px; background: #323c44; border-radius: 4px; box-shadow: 0 0 8px rgba(0, 0, 0, .3), 0 5px 0 #1d1e21; display: flex; align-items: center; font: 15px 'Noto Sans', sans-serif; color: #e8edf0; }
.dots { margin-left: 18px; }
.pause { width: 12px; height: 18px; margin-left: 36px; border: solid #dfe5e8; border-width: 0 4px; }
.p-t { margin-left: 11px; width: 46px; letter-spacing: .3px; }
.stop { width: 18px; height: 18px; margin-left: 48px; background: #dfe5e5; border-radius: 1px; }
.s-t { margin-left: 8px; width: 36px; letter-spacing: .5px; } .f8 { margin-left: 7px; width: 54px; letter-spacing: .6px; color: #8b949b; }
.time { color: #7d868c; width: 64px; font-size: 14.6px; }
.tools { margin-left: 12px; }
.mark { position: absolute; left: 960px; top: 651px; width: 317px; height: 69px; border-radius: 6px 6px 0 0; background: rgba(0, 0, 0, .46); }
</style>
